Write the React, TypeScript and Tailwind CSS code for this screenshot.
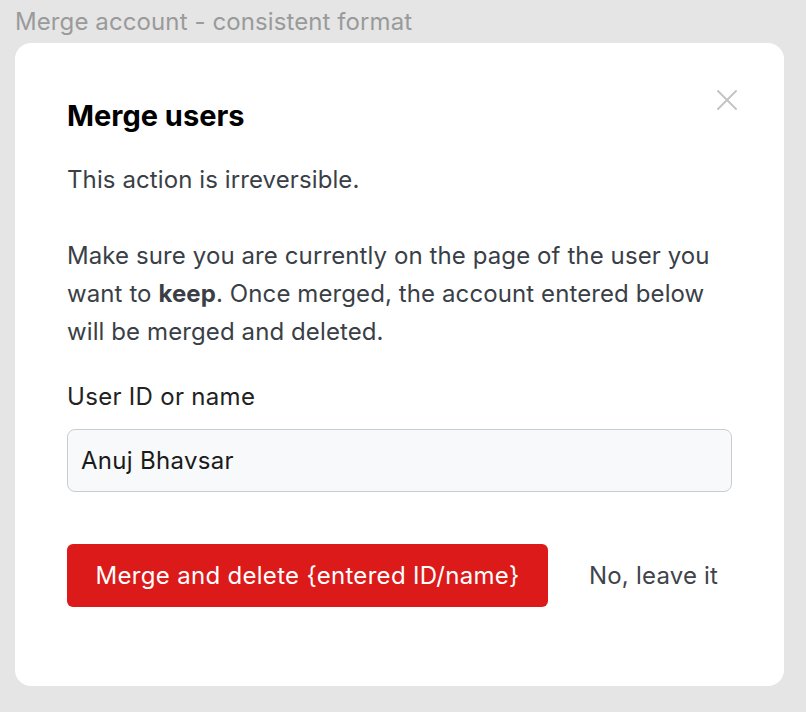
import React from 'react';

export default function App() {
  return (
    <div className="min-h-[712px] bg-[#e5e5e5] pl-[15px] pr-[22px] pb-[26px] font-['Inter','Noto_Sans',sans-serif]">
      <div className="h-[43px] flex items-center text-[24px] leading-none text-[#9a9a9a] tracking-[0.1px]">
        Merge account - consistent format
      </div>
      <div className="relative rounded-[16px] bg-white px-[52px] pt-[56px] pb-[79px]">
        <button
          type="button"
          aria-label="Close"
          className="absolute top-[46px] right-[46px] w-[22px] h-[22px] flex items-center justify-center text-[#c4c4c4]"
        >
          <svg width="22" height="22" viewBox="0 0 22 22" fill="none" stroke="currentColor" strokeWidth="2" strokeLinecap="round">
            <path d="M2 2L20 20M20 2L2 20" />
          </svg>
        </button>
        <h2 className="text-[29px] leading-[34px] font-bold text-black">Merge users</h2>
        <div className="mt-[28px] text-[24px] leading-[38px] text-[#3a3f47] tracking-[0.1px]">
          <p>This action is irreversible.</p>
          <p className="mt-[38px]">
            Make sure you are currently on the page of the user you want to <strong className="font-bold">keep</strong>. Once merged, the account entered below will be merged and deleted.
          </p>
        </div>
        <label className="block mt-[30px] text-[24px] leading-[32px] text-[#222] tracking-[0.3px]">User ID or name</label>
        <div className="mt-[16px] h-[63px] rounded-[8px] border border-[#c9ccd1] bg-[#f8f9fa] flex items-center px-[13px] text-[24px] text-[#1a1a1a] tracking-[0.3px]">
          Anuj Bhavsar
        </div>
        <div className="mt-[52px] flex items-center gap-[41px]">
          <button type="button" className="h-[63px] w-[481px] rounded-[6px] bg-[#dc1a1a] text-white text-[24px] tracking-[0.3px]">
            Merge and delete {'{entered ID/name}'}
          </button>
          <button type="button" className="text-[24px] text-[#3f444b] tracking-[0.2px]">No, leave it</button>
        </div>
      </div>
    </div>
  );
}
